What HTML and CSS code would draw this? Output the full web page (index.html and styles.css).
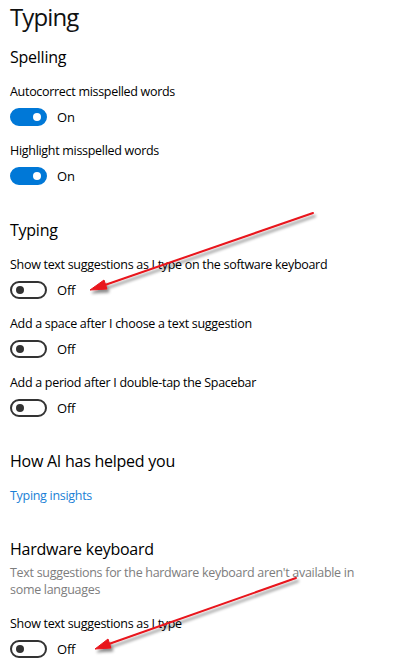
FILE: index.html
```html
<!DOCTYPE html>
<html lang="en">
<head>
<meta charset="utf-8">
<title>Typing</title>
<link rel="stylesheet" href="styles.css">
</head>
<body>
<main class="page">
  <h1 class="title">Typing</h1>

  <section class="group group-first">
    <h2 class="group-title">Spelling</h2>
    <div class="setting">
      <div class="label">Autocorrect misspelled words</div>
      <div class="toggle-row"><span class="toggle on"><span class="knob"></span></span><span class="state">On</span></div>
    </div>
    <div class="setting">
      <div class="label">Highlight misspelled words</div>
      <div class="toggle-row"><span class="toggle on"><span class="knob"></span></span><span class="state">On</span></div>
    </div>
  </section>

  <section class="group">
    <h2 class="group-title">Typing</h2>
    <div class="setting">
      <div class="label">Show text suggestions as I type on the software keyboard</div>
      <div class="toggle-row"><span class="toggle"><span class="knob"></span></span><span class="state">Off</span></div>
    </div>
    <div class="setting">
      <div class="label">Add a space after I choose a text suggestion</div>
      <div class="toggle-row"><span class="toggle"><span class="knob"></span></span><span class="state">Off</span></div>
    </div>
    <div class="setting">
      <div class="label">Add a period after I double-tap the Spacebar</div>
      <div class="toggle-row"><span class="toggle"><span class="knob"></span></span><span class="state">Off</span></div>
    </div>
  </section>

  <section class="group group-compact">
    <h2 class="group-title">How AI has helped you</h2>
    <a class="link" href="#">Typing insights</a>
  </section>

  <section class="group group-compact">
    <h2 class="group-title">Hardware keyboard</h2>
    <p class="desc">Text suggestions for the hardware keyboard aren't available in some languages</p>
    <div class="setting">
      <div class="label">Show text suggestions as I type</div>
      <div class="toggle-row"><span class="toggle"><span class="knob"></span></span><span class="state">Off</span></div>
    </div>
  </section>

  <svg class="arrows" width="400" height="671" viewBox="0 0 400 671" aria-hidden="true">
    <defs>
      <filter id="shadow" x="-20%" y="-20%" width="140%" height="140%">
        <feDropShadow dx="2" dy="3" stdDeviation="1.6" flood-color="#000" flood-opacity="0.45"/>
      </filter>
    </defs>
    <g filter="url(#shadow)" fill="#e8141c" stroke="#e8141c">
      <line x1="313" y1="213" x2="102" y2="286" stroke-width="2" stroke-linecap="round"/>
      <polygon points="90,290 104,280 107,289" stroke-width="1" stroke-linejoin="round"/>
      <line x1="296" y1="578" x2="106" y2="645" stroke-width="2" stroke-linecap="round"/>
      <polygon points="95,649 108,639 111,648" stroke-width="1" stroke-linejoin="round"/>
    </g>
  </svg>
</main>
</body>
</html>
```

FILE: styles.css
```css
* { box-sizing: border-box; }

html, body {
  margin: 0;
  padding: 0;
  background: #ffffff;
}

body {
  font-family: "Open Sans", "Noto Sans", "Liberation Sans", sans-serif;
  color: #000000;
  width: 400px;
  height: 671px;
  overflow: hidden;
}

.page {
  position: relative;
  padding: 0 0 0 10px;
  display: flex;
  flex-direction: column;
}

.title {
  margin: 0;
  font-size: 24px;
  font-weight: 400;
  line-height: 34px;
  letter-spacing: -0.9px;
  color: #111111;
}

.group {
  display: flex;
  flex-direction: column;
  margin-top: 32px;
}

.group-first {
  margin-top: 11px;
}

.group-compact {
  margin-top: 31px;
}

.group-title {
  margin: 0 0 13px 0;
  font-size: 16px;
  font-weight: 400;
  line-height: 24px;
  letter-spacing: -0.25px;
}

.setting {
  display: flex;
  flex-direction: column;
  gap: 5px;
  margin-bottom: 14px;
}

.setting:last-child {
  margin-bottom: 0;
}

.label {
  font-size: 12.5px;
  line-height: 20px;
  letter-spacing: -0.3px;
}

.toggle-row {
  display: flex;
  align-items: center;
  height: 20px;
  gap: 10px;
}

.toggle {
  position: relative;
  width: 37px;
  height: 18px;
  border-radius: 9px;
  border: 2px solid #333333;
  background: #ffffff;
  flex: none;
}

.toggle .knob {
  position: absolute;
  top: 3px;
  left: 4px;
  width: 8px;
  height: 8px;
  border-radius: 50%;
  background: #333333;
}

.toggle.on {
  background: #0078d7;
  border-color: #0078d7;
}

.toggle.on .knob {
  left: auto;
  right: 4px;
  background: #ffffff;
}

.state {
  font-size: 13px;
  line-height: 20px;
  letter-spacing: -0.2px;
}

.link {
  font-size: 12.5px;
  line-height: 20px;
  color: #1a7fd6;
  text-decoration: none;
  letter-spacing: -0.3px;
}

.desc {
  margin: -10px 0 16px 0;
  font-size: 12.5px;
  line-height: 17px;
  color: #7d7d7d;
  letter-spacing: -0.3px;
  max-width: 360px;
}

.arrows {
  position: absolute;
  left: 0;
  top: 0;
  pointer-events: none;
}
```
